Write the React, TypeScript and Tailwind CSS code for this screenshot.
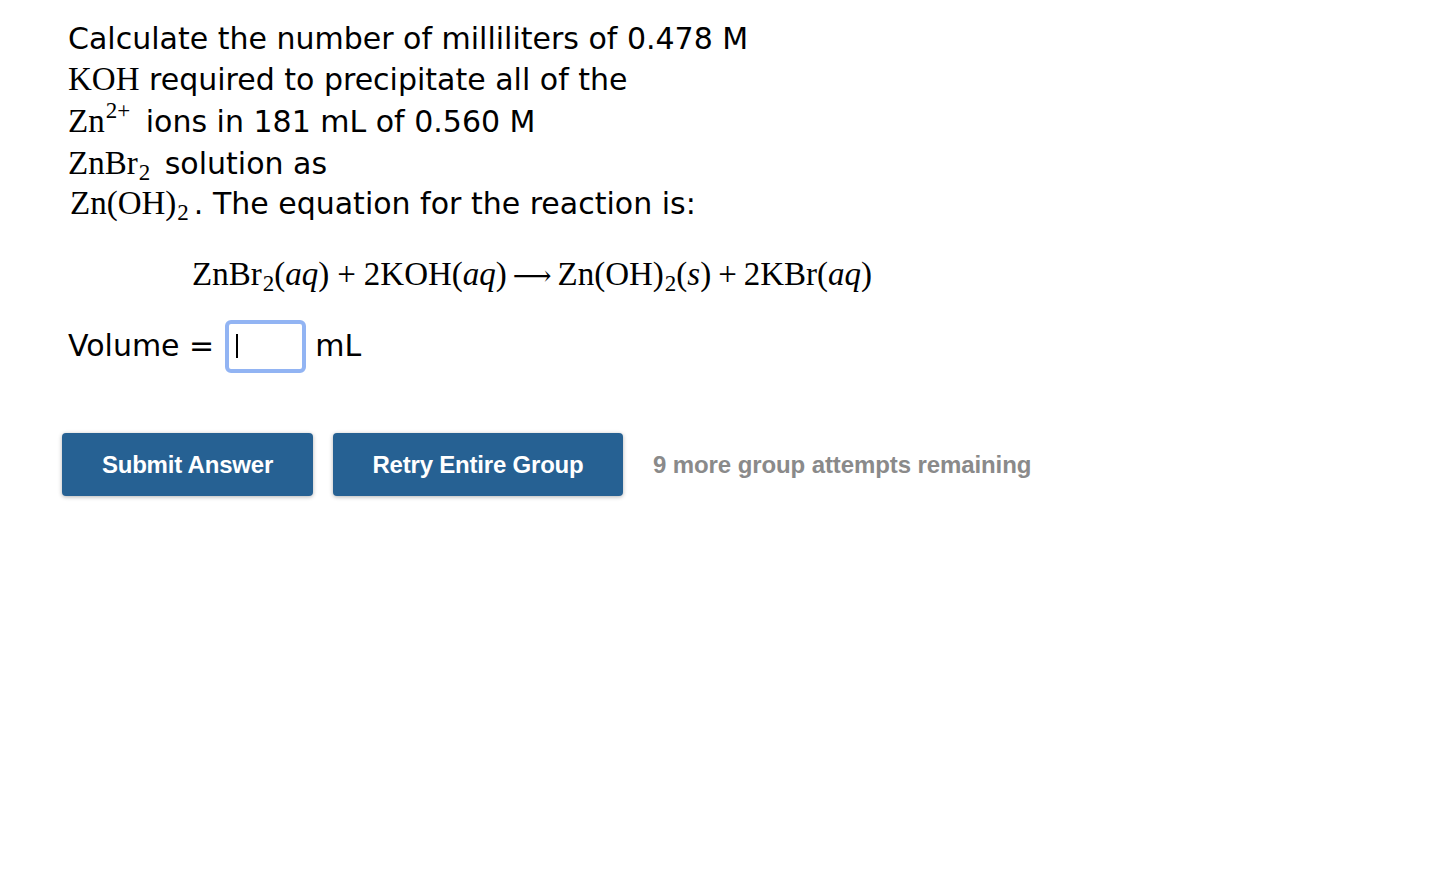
export default function App() {
  const m = "font-['Liberation_Serif',serif] text-[33px]";
  const sub = "text-[23px] align-[-6px] leading-none pl-[1px]";
  return (
    <div className="min-h-screen bg-white text-black">
      <div className="pl-[68px] pt-[19px] font-['DejaVu_Sans',Verdana,sans-serif] text-[30px] leading-[40px]">
        <div className="h-[40px]">Calculate the number of milliliters of 0.478 M</div>
        <div className="h-[40px]">
          <span className={m}>KOH</span> required to precipitate all of the
        </div>
        <div className="h-[44px] pt-[2px]">
          <span className={m}>
            Zn<span className="text-[23px] relative top-[-14px] leading-none pl-[1px] pr-[6px]">2+</span>
          </span>{" "}
          ions in 181 mL of 0.560 M
        </div>
        <div className="h-[40px]">
          <span className={m}>
            ZnBr<span className={sub}>2</span>
          </span>
          <span className="pl-[5px]"> solution as</span>
        </div>
        <div className="h-[40px]">
          <span className={`${m} pl-[2px]`}>
            Zn(OH)<span className={sub}>2</span>
          </span>
          <span className="pl-[5px]">. The equation for the reaction is:</span>
        </div>
        <div className={`${m} pl-[124px] mt-[31px] h-[40px]`}>
          ZnBr<span className={sub}>2</span>(<i>aq</i>)<span className="mx-[8px]">+</span>2KOH(<i>aq</i>)
          <span className="mx-[6px] font-['DejaVu_Serif',serif] text-[27px]">⟶</span>Zn(OH)<span className={sub}>2</span>(<i>s</i>)
          <span className="mx-[7px]">+</span>2KBr(<i>aq</i>)
        </div>
        <div className="flex items-center mt-[25px] h-[54px]">
          <span>Volume =</span>
          <div className="ml-[11px] w-[81px] h-[53px] rounded-[6px] border-[4px] border-[#92b4f3] bg-white flex items-center pl-[7px]">
            <div className="w-[2px] h-[24px] bg-black" />
          </div>
          <span className="ml-[9px]">mL</span>
        </div>
      </div>
      <div className="flex items-center pl-[62px] mt-[60px] gap-[20px] font-['Liberation_Sans',Arial,sans-serif] font-bold text-[24px]">
        <button className="w-[251px] h-[63px] rounded-[4px] bg-[#266193] text-white shadow-[0_1px_4px_rgba(0,0,0,0.3)] tracking-[-0.2px]">
          Submit Answer
        </button>
        <button className="w-[290px] h-[63px] rounded-[4px] bg-[#266193] text-white shadow-[0_1px_4px_rgba(0,0,0,0.3)] tracking-[-0.2px]">
          Retry Entire Group
        </button>
        <span className="ml-[10px] text-[#8a8a8a] tracking-[-0.1px]">9 more group attempts remaining</span>
      </div>
    </div>
  );
}
